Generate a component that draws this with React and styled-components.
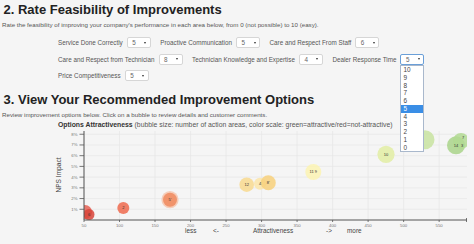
import React from "react";
import styled, { createGlobalStyle } from "styled-components";

const GlobalStyle = createGlobalStyle`
    html, body {
        margin: 0;
        padding: 0;
        background: #f5f5f5;
    }
    body {
        font-family: "Liberation Sans", Arial, sans-serif;
        color: #555;
    }
`;

const Page = styled.div`
    width: 474px;
    height: 244px;
    overflow: hidden;
    padding: 2px 0 0 2px;
    box-sizing: border-box;
`;

const Heading = styled.h2`
    margin: ${(p) => p.$top || 0}px 0 0 1.5px;
    font-size: 13px;
    line-height: 15px;
    font-weight: 700;
    color: #222;
`;

const Intro = styled.p`
    margin: ${(p) => p.$top || 0}px 0 0;
    font-size: 6.2px;
    line-height: 8px;
    color: #555;
`;

const Form = styled.div`
    margin: 8px 0 0 56px;
    display: flex;
    flex-direction: column;
    gap: 5.7px;
`;

const Row = styled.div`
    display: flex;
    align-items: center;
    height: 11px;
`;

const Field = styled.div`
    display: flex;
    align-items: center;
    gap: 4px;
    margin-right: 9.5px;
    position: relative;
`;

const Label = styled.span`
    font-size: 6.3px;
    color: #555;
    white-space: nowrap;
`;

const Select = styled.div`
    width: 24px;
    height: 11px;
    box-sizing: border-box;
    background: #fff;
    border: 1px solid ${(p) => (p.$open ? "#6a9fd8" : "#d6d6d6")};
    border-radius: 2px;
    display: flex;
    align-items: center;
    justify-content: space-between;
    padding: 0 3.5px 0 4.5px;
    font-size: 6.3px;
    color: #666;
`;

const Caret = styled.span`
    width: 0;
    height: 0;
    border-left: 1.4px solid transparent;
    border-right: 1.4px solid transparent;
    border-top: 2.2px solid #333;
`;

const Options = styled.ul`
    position: absolute;
    left: ${(p) => p.$left}px;
    top: 11.5px;
    width: 24px;
    margin: 0;
    padding: 0;
    list-style: none;
    background: #fff;
    border: 1px solid #a9b8cc;
    box-sizing: border-box;
    z-index: 5;
`;

const Option = styled.li`
    height: 7.76px;
    line-height: 7.76px;
    padding-left: 2px;
    font-size: 6.4px;
    color: ${(p) => (p.$active ? "#fff" : "#444")};
    background: ${(p) => (p.$active ? "#3a8ee6" : "transparent")};
`;

const ChartTitle = styled.div`
    margin: 2px 0 0 56px;
    font-size: 6.85px;
    line-height: 8px;
    color: #555;
    white-space: nowrap;

    b {
        color: #333;
    }
`;

const Chart = styled.svg`
    display: block;
    margin-left: -2px;
`;

const rows = [
    [
        ["Service Done Correctly", 5],
        ["Proactive Communication", 5],
        ["Care and Respect From Staff", 6],
    ],
    [
        ["Care and Respect from Technician", 8],
        ["Technician Knowledge and Expertise", 4],
        ["Dealer Response Time", 5, true],
    ],
    [["Price Competitiveness", 5]],
];

const xs = [50, 100, 150, 200, 250, 300, 350, 400, 450, 500, 550];
const px = (a) => 84 + (a - 50) * 0.7103;
const py = (v) => 223 - 10.72 * v;

const bubbles = [
    { x: 85, y: 215, r: 7, c: "#e4584a", o: 0.8 },
    { x: 89, y: 217.5, r: 5.5, c: "#d8443a", t: "6" },
    { x: 123.3, y: 211, r: 6, c: "#ee6a4e", t: "2" },
    { x: 170, y: 202.7, r: 8.6, c: "#f6b391", o: 0.6 },
    { x: 170, y: 202.7, r: 7, c: "#f08a5e", t: "5'" },
    { x: 246.7, y: 187.7, r: 7.3, c: "#f8d98e", t: "12" },
    { x: 260, y: 186.7, r: 6, c: "#fbe5a8", t: "4" },
    { x: 268.3, y: 185.7, r: 7.5, c: "#f7d07b", t: "8'" },
    { x: 313.3, y: 175, r: 8, c: "#fbf3b3", t: "11 9" },
    { x: 386, y: 157.3, r: 8.6, c: "#e2eda3", t: "10" },
    { x: 425, y: 142.7, r: 9.5, c: "#c8e3a0" },
    { x: 456, y: 148.3, r: 9, c: "#a9d48a", t: "14" },
    { x: 461, y: 144, r: 8, c: "#b1d992" },
];

const font = "Liberation Sans, Arial, sans-serif";

const App = () => {
    return (
        <Page>
            <GlobalStyle />
            <Heading>2. Rate Feasibility of Improvements</Heading>
            <Intro $top={4}>
                Rate the feasibility of improving your company's performance in each area below, from 0 (not possible) to 10 (easy).
            </Intro>
            <Form>
                {rows.map((row, i) => (
                    <Row key={i}>
                        {row.map(([label, value, open]) => (
                            <Field key={label}>
                                <Label>{label}</Label>
                                <Select $open={open}>
                                    {value}
                                    <Caret />
                                </Select>
                                {open && (
                                    <Options $left={68}>
                                        {[10, 9, 8, 7, 6, 5, 4, 3, 2, 1, 0].map((n) => (
                                            <Option key={n} $active={n === 5}>
                                                {n}
                                            </Option>
                                        ))}
                                    </Options>
                                )}
                            </Field>
                        ))}
                    </Row>
                ))}
            </Form>
            <Heading $top={10.5}>3. View Your Recommended Improvement Options</Heading>
            <Intro $top={3.7}>
                Review improvement options below. Click on a bubble to review details and customer comments.
            </Intro>
            <ChartTitle>
                <b>Options Attractiveness</b> (bubble size: number of action areas, color scale: green=attractive/red=not-attractive)
            </ChartTitle>
            <Chart width="474" height="112" viewBox="0 132 474 112">
                <defs>
                    <clipPath id="plot">
                        <rect x="84" y="130" width="383" height="94" />
                    </clipPath>
                </defs>
                {[1, 2, 3, 4, 5, 6, 7, 8].map((v) => (
                    <line key={v} x1="84" x2="467" y1={py(v)} y2={py(v)} stroke="#e6e6e6" strokeWidth="0.7" />
                ))}
                {xs.map((a) => (
                    <line key={a} x1={px(a)} x2={px(a)} y1="134" y2="223" stroke="#e6e6e6" strokeWidth="0.7" />
                ))}
                <g clipPath="url(#plot)">
                    {bubbles.map((b, i) => (
                        <circle key={i} cx={b.x} cy={b.y} r={b.r} fill={b.c} opacity={b.o || 0.85} />
                    ))}
                    {bubbles.filter((b) => b.t).map((b, i) => (
                        <text key={i} x={b.x} y={b.y + 1.4} fontSize="4" fill="#333" textAnchor="middle" fontFamily={font}>
                            {b.t}
                        </text>
                    ))}
                    <text x="463" y="141.5" fontSize="4" fill="#333" textAnchor="middle" fontFamily={font}>7</text>
                    <text x="462" y="150" fontSize="4" fill="#333" textAnchor="middle" fontFamily={font}>3</text>
                </g>
                <line x1="84" x2="84" y1="134" y2="223" stroke="#555" strokeWidth="1" />
                <line x1="84" x2="467" y1="223" y2="223" stroke="#555" strokeWidth="1" />
                {[1, 2, 3, 4, 5, 6, 7, 8].map((v) => (
                    <g key={v}>
                        <line x1="79.5" x2="84" y1={py(v)} y2={py(v)} stroke="#555" strokeWidth="0.8" />
                        <text x="77.5" y={py(v) + 1.5} fontSize="4.3" fill="#777" textAnchor="end" fontFamily={font}>
                            {v}%
                        </text>
                    </g>
                ))}
                {xs.map((a) => (
                    <g key={a}>
                        <line x1={px(a)} x2={px(a)} y1="223" y2="225" stroke="#555" strokeWidth="0.8" />
                        <text x={px(a)} y="229.5" fontSize="4.3" fill="#777" textAnchor="middle" fontFamily={font}>
                            {a}
                        </text>
                    </g>
                ))}
                <line x1="466.5" x2="466.5" y1="221" y2="225" stroke="#555" strokeWidth="0.8" />
                <text transform="translate(61 178) rotate(-90)" fontSize="6.6" fill="#444" textAnchor="middle" fontFamily={font}>
                    NPS Impact
                </text>
                <g fontSize="6.4" fill="#444" fontFamily={font}>
                    <text x="185" y="236">less</text>
                    <text x="213" y="236">&lt;-</text>
                    <text x="253" y="236">Attractiveness</text>
                    <text x="326" y="236">-&gt;</text>
                    <text x="347" y="236">more</text>
                </g>
            </Chart>
        </Page>
    );
};

export default App;
